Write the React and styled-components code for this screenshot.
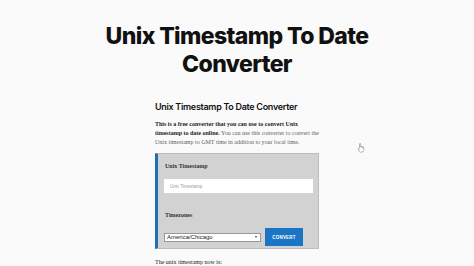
import React from "react";
import styled, { createGlobalStyle } from "styled-components";

const Global = createGlobalStyle`
  html, body { margin: 0; padding: 0; background: #fafafa; }
  body { width: 474px; height: 266px; overflow: hidden; }
`;

const Page = styled.div`
  display: flex;
  flex-direction: column;
  align-items: center;
  padding-top: 22px;
`;

const Title = styled.h1`
  margin: 0;
  font-family: Inter, "Liberation Sans", sans-serif;
  font-weight: 800;
  font-size: 23px;
  line-height: 28px;
  letter-spacing: -0.6px;
  color: #111;
  text-align: center;
  width: 300px;
`;

const Column = styled.div`
  width: 164px;
  margin-top: 23px;
  display: flex;
  flex-direction: column;
`;

const SubHeading = styled.h2`
  margin: 0;
  font-family: Inter, "Liberation Sans", sans-serif;
  font-weight: 600;
  font-size: 9px;
  line-height: 12px;
  letter-spacing: -0.3px;
  color: #111;
`;

const Para = styled.p`
  margin: 7px 0 0;
  font-family: "Liberation Serif", serif;
  font-size: 6px;
  line-height: 9px;
  color: #5e5e5e;
  b { color: #222; font-weight: 700; }
`;

const Box = styled.div`
  margin-top: 6px;
  height: 96px;
  box-sizing: border-box;
  background: #d2d2d2;
  border: 1px solid #bdbdbd;
  border-left: 3px solid #1d6fb8;
  padding: 8px 6px 0 6px;
  display: flex;
  flex-direction: column;
`;

const Label = styled.div`
  font-family: "Liberation Serif", serif;
  font-weight: 700;
  font-size: 6px;
  line-height: 8px;
  color: #333;
  margin-left: 1px;
  margin-top: ${(p) => p.$top || 0}px;
`;

const Input = styled.div`
  margin-top: 9px;
  width: 149px;
  height: 14px;
  background: #fff;
  box-sizing: border-box;
  padding-left: 6px;
  display: flex;
  align-items: center;
  font-family: "Liberation Sans", sans-serif;
  font-size: 4.5px;
  color: #999;
`;

const Row = styled.div`
  margin-top: 9px;
  display: flex;
  align-items: center;
  gap: 4px;
`;

const Select = styled.div`
  width: 97px;
  height: 9px;
  box-sizing: border-box;
  background: #fff;
  border: 1px solid #999;
  display: flex;
  align-items: center;
  justify-content: space-between;
  padding: 0 3px 0 2px;
  font-family: "Liberation Sans", sans-serif;
  font-size: 6px;
  color: #222;
`;

const Arrow = styled.span`
  width: 0;
  height: 0;
  border-left: 1.5px solid transparent;
  border-right: 1.5px solid transparent;
  border-top: 2px solid #333;
`;

const Button = styled.div`
  width: 38px;
  height: 18px;
  background: #1a76c5;
  color: #fff;
  display: flex;
  align-items: center;
  justify-content: center;
  font-family: "Liberation Sans", sans-serif;
  font-weight: 700;
  font-size: 4.5px;
  letter-spacing: 0.2px;
`;

const NowText = styled.div`
  margin-top: 9px;
  font-family: "Liberation Serif", serif;
  font-size: 6px;
  line-height: 8px;
  color: #222;
`;

const Cursor = styled.svg`
  position: absolute;
  left: 357px;
  top: 143px;
`;

export default function App() {
  return (
    <>
      <Global />
      <Page>
        <Title>Unix Timestamp To Date Converter</Title>
        <Column>
          <SubHeading>Unix Timestamp To Date Converter</SubHeading>
          <Para>
            <b>This is a free converter that you can use to convert Unix timestamp to date online.</b>{" "}
            You can use this converter to convert the Unix timestamp to GMT time in addition to your local time.
          </Para>
          <Box>
            <Label>Unix Timestamp</Label>
            <Input>Unix Timestamp</Input>
            <Label $top={18}>Timezones</Label>
            <Row>
              <Select>
                America/Chicago
                <Arrow />
              </Select>
              <Button>CONVERT</Button>
            </Row>
          </Box>
          <NowText>The unix timestamp now is:</NowText>
        </Column>
      </Page>
      <Cursor width="8" height="10" viewBox="0 0 8 10">
        <path
          d="M2.5 1 v4.5 M2.5 1 a0.6 0.6 0 0 1 1.2 0 v3 M3.7 3.5 h1.2 v1.5 M4.9 3.8 h1 v1.5 M5.9 4.2 h0.8 v2.5 q0 2.5 -2.2 2.5 h-1 q-1.2 0 -1.6 -1.5 l-0.8 -2 q0.5 -0.5 1.4 0.4"
          fill="#fff"
          stroke="#888"
          strokeWidth="0.6"
        />
      </Cursor>
    </>
  );
}
